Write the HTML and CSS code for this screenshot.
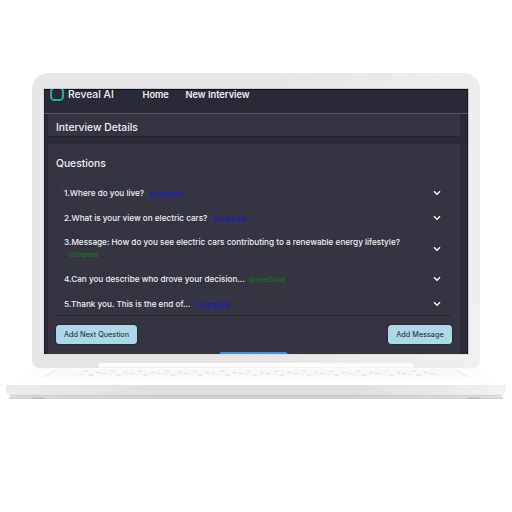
FILE: index.html
```
<!DOCTYPE html>
<html lang="en">
<head>
<meta charset="utf-8">
<title>Reveal AI</title>
<link rel="stylesheet" href="styles.css">
</head>
<body>
<div class="laptop">
  <div class="lid">
    <div class="screen">
      <header class="nav">
        <svg class="logo" width="14" height="14" viewBox="0 0 14 14"><rect x="1" y="1" width="12" height="12" rx="3.6" fill="none" stroke="#20b39b" stroke-width="2"/></svg>
        <span class="brand">Reveal AI</span>
        <a class="link home">Home</a>
        <a class="link new">New Interview</a>
      </header>
      <section class="details"><h2>Interview Details</h2></section>
      <section class="questions">
        <h2>Questions</h2>
        <div class="list">
          <div class="row"><p><span class="q">1.Where do you live?</span><span class="tag blue">Incomplete</span></p><svg class="chev" viewBox="0 0 8 6"><path d="M1 1.300 4 4.300 7 1.300"/></svg></div>
          <div class="row"><p><span class="q">2.What is your view on electric cars?</span><span class="tag blue">Incomplete</span></p><svg class="chev" viewBox="0 0 8 6"><path d="M1 1.300 4 4.300 7 1.300"/></svg></div>
          <div class="row tall"><p><span class="q">3.Message: How do you see electric cars contributing to a renewable energy lifestyle?</span><span class="tag green">Complete</span></p><svg class="chev" viewBox="0 0 8 6"><path d="M1 1.300 4 4.300 7 1.300"/></svg></div>
          <div class="row"><p><span class="q">4.Can you describe who drove your decision...</span><span class="tag green">Done/Good</span></p><svg class="chev" viewBox="0 0 8 6"><path d="M1 1.300 4 4.300 7 1.300"/></svg></div>
          <div class="row"><p><span class="q">5.Thank you. This is the end of...</span><span class="tag blue">Incomplete</span></p><svg class="chev" viewBox="0 0 8 6"><path d="M1 1.300 4 4.300 7 1.300"/></svg></div>
        </div>
        <div class="actions"><button class="add-q">Add Next Question</button><button class="add-m">Add Message</button></div>
        <div class="submit"></div>
      </section>
    </div>
  </div>
  <svg class="base" width="512" height="40" viewBox="0 362 512 40">
    <defs>
      <linearGradient id="deck" x1="0" y1="0" x2="0" y2="1"><stop offset="0" stop-color="#fcfcfc"/><stop offset="1" stop-color="#fff"/></linearGradient>
      <linearGradient id="front" x1="0" y1="0" x2="0" y2="1"><stop offset="0" stop-color="#dedede"/><stop offset=".7" stop-color="#e0e0e0"/><stop offset="1" stop-color="#d2d2d2"/></linearGradient>
      <linearGradient id="side" x1="0" y1="0" x2="1" y2="0"><stop offset="0" stop-color="#fff" stop-opacity=".4"/><stop offset=".3" stop-color="#fff" stop-opacity="0"/><stop offset=".7" stop-color="#fff" stop-opacity="0"/><stop offset="1" stop-color="#fff" stop-opacity=".6"/></linearGradient>
      <pattern id="keys" x="173" y="370" width="27.300" height="6" patternUnits="userSpaceOnUse">
        <path d="M5 2.500h4M20 1.200h4M11 3.500h4M25 5h2.300M0 5h2" stroke="#e4e4e4" stroke-width="1.300"/><path d="M16 4.200h5" stroke="#efefef" stroke-width="1.300"/>
      </pattern>
    </defs>
    <path d="M32 368H480L506 385H6Z" fill="url(#deck)"/>
    <path d="M98.500 363H413.500V367.500H98.500Z" fill="#fdfdfd"/>
    <path d="M58 369H454L466 377H45Z" fill="#f9f9f9"/>
    <path d="M83 370H430L440 376H75Z" fill="url(#keys)"/>
    <path d="M55 370.500 44 377M457 370.500 468 377" stroke="#f0f0f0" stroke-width="2"/>
    <path d="M6 385H506V391Q505 395 498 397H14Q7 395 6 391Z" fill="url(#front)"/>
    <path d="M6 385H506V391Q505 395 498 397H14Q7 395 6 391Z" fill="url(#side)"/>
    <path d="M10 395.700H502" stroke="#c6c6c6" stroke-width="1"/>
    <path d="M9 398H503" stroke="#d2d2d2" stroke-width="2"/>
    <path d="M32 398H44M468 398H480" stroke="#bebebe" stroke-width="1.500"/>
  </svg>
</div>
</body>
</html>
```

FILE: styles.css
```
* { box-sizing: border-box; }
body { margin: 0; width: 512px; height: 512px; overflow: hidden; background: #fff; font-family: Inter, "Liberation Sans", sans-serif; }
.laptop { padding-top: 73px; }
.lid { width: 448px; height: 295px; margin-left: 32px; padding: 15px 11px 0; border-radius: 16px 16px 7px 7px; background: linear-gradient(100deg, #e6e6e6, #e6e6e6 50%, #f0f0f0); }
.screen { width: 426px; height: 267px; overflow: hidden; border: 1px solid #c9c9cc; border-bottom-color: #dedede; border-left-color: #dcdcde; background: #292a35; box-shadow: inset 0 1px #10111f, inset -1px 0 #171827, inset 1px 0 #1d1e2b; color: #f0f0f2; }
.nav { display: flex; height: 25px; padding: 0 0 14px 6px; align-items: center; border-bottom: 1px solid #555661; white-space: nowrap; }
.logo { flex: none; margin-right: 4px; }
.brand { width: 74.500px; font-size: 10.350px; font-weight: 500; }
.link { font-size: 9.250px; font-weight: 600; }
.home { width: 43px; }
h2 { margin: 0; font-size: 10.300px; font-weight: 500; white-space: nowrap; }
.details { width: 412px; height: 23px; margin-left: 4px; padding-left: 8px; line-height: 26px; background: #343541; border-bottom: 1px solid #1f202b; }
.questions { height: 211px; width: 412px; margin: 7px 0 0 4px; padding: 0 8px; background: #343541; }
.questions h2 { height: 36px; line-height: 38px; }
.list { height: 136px; border: 1px solid #30313c; border-bottom-color: #262732; border-radius: 2px; }
.row { display: flex; height: 24.600px; padding: 0 10px 0 7px; align-items: center; justify-content: space-between; }
.row p { margin: -2px 0 0; line-height: 12.500px; white-space: nowrap; }
.tall { height: 37px; }
.row.tall p { margin-top: 1px; }
.tall span { display: block; height: 13px; line-height: 13px; }
.q { font-size: 8.160px; font-weight: 500; }
.tag { margin-left: 5px; font-size: 6.500px; }
.blue { color: #0c0cf0; }
.green { color: #14801a; }
.chev { width: 8px; height: 6px; flex: none; fill: none; stroke: #fff; stroke-width: 1.300; }
.actions { display: flex; justify-content: space-between; padding-top: 8.500px; }
button { height: 19px; padding: 0; border: 0; border-radius: 3.500px; background: #add8e6; color: #17202a; font: 400 7.300px Inter, sans-serif; box-shadow: 0 0 1px 1px #292737; white-space: nowrap; }
.add-q { width: 81px; }
.add-m { width: 64px; }
.submit { width: 69px; height: 12px; margin: 8px 0 0 163px; border-radius: 3px; background: #438ff0; }
.base { display: block; margin-top: -6px; }
```
